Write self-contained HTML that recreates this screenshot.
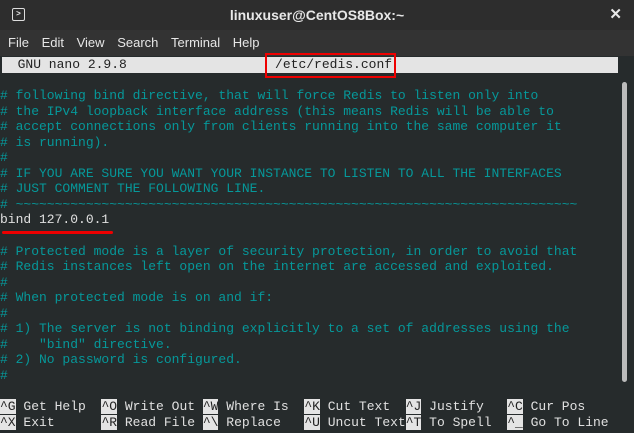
<html><head><style>
body{margin:0;width:634px;height:433px;background:#262b2c;overflow:hidden;position:relative;font-family:"Liberation Sans",sans-serif}
.tb{position:absolute;left:0;top:0;width:634px;height:30px;background:#2d2d2d;color:#e8e8e8;font-size:14px;text-align:center;line-height:30px;font-weight:bold}
.mb{position:absolute;left:0;top:30px;width:634px;height:26px;background:#333;color:#e6e6e6;font-size:13px;line-height:26px}
.mb span{margin-left:8px;margin-right:1px}
.t{position:absolute;left:0;top:57px;width:622px;font-family:"Liberation Mono",monospace;font-size:13px;line-height:15.55px;white-space:pre;color:#06989a}
.w{color:#e0e0e0}
.hd{background:#e4e4e4;color:#222;display:block;margin-left:2px;width:616px}
.k{background:#e4e4e4;color:#222}
.sb{position:absolute;left:622px;top:82px;width:5px;height:300px;background:#bbb;border-radius:3px}
</style></head><body>
<div class="tb">linuxuser@CentOS8Box:~<span style="position:absolute;left:12px;top:8px;width:11px;height:11px;border:1.5px solid #ddd;border-radius:2px;font-size:8px;line-height:10px">&gt;</span><span style="position:absolute;right:12px;top:0;font-size:15px">✕</span></div>
<div class="mb"><span>File</span> <span>Edit</span> <span>View</span> <span>Search</span> <span>Terminal</span> <span>Help</span></div>
<div class="sb"></div>
<div class="t"><span class="hd">  GNU nano 2.9.8                   /etc/redis.conf                     </span>
# following bind directive, that will force Redis to listen only into
# the IPv4 loopback interface address (this means Redis will be able to
# accept connections only from clients running into the same computer it
# is running).
#
# IF YOU ARE SURE YOU WANT YOUR INSTANCE TO LISTEN TO ALL THE INTERFACES
# JUST COMMENT THE FOLLOWING LINE.
# ~~~~~~~~~~~~~~~~~~~~~~~~~~~~~~~~~~~~~~~~~~~~~~~~~~~~~~~~~~~~~~~~~~~~~~~~
<span class="w">bind 127.0.0.1</span>

# Protected mode is a layer of security protection, in order to avoid that
# Redis instances left open on the internet are accessed and exploited.
#
# When protected mode is on and if:
#
# 1) The server is not binding explicitly to a set of addresses using the
#    "bind" directive.
# 2) No password is configured.
#

<span class="w"><span class="k">^G</span> Get Help  <span class="k">^O</span> Write Out <span class="k">^W</span> Where Is  <span class="k">^K</span> Cut Text  <span class="k">^J</span> Justify   <span class="k">^C</span> Cur Pos</span>
<span class="w"><span class="k">^X</span> Exit      <span class="k">^R</span> Read File <span class="k">^\</span> Replace   <span class="k">^U</span> Uncut Text<span class="k">^T</span> To Spell  <span class="k">^_</span> Go To Line</span></div>
<div style="position:absolute;left:265px;top:53px;width:131px;height:25px;border:2.5px solid #e00;box-sizing:border-box"></div>
<div style="position:absolute;left:2px;top:231px;width:111px;height:3px;background:#e00;border-radius:2px"></div>
</body></html>
